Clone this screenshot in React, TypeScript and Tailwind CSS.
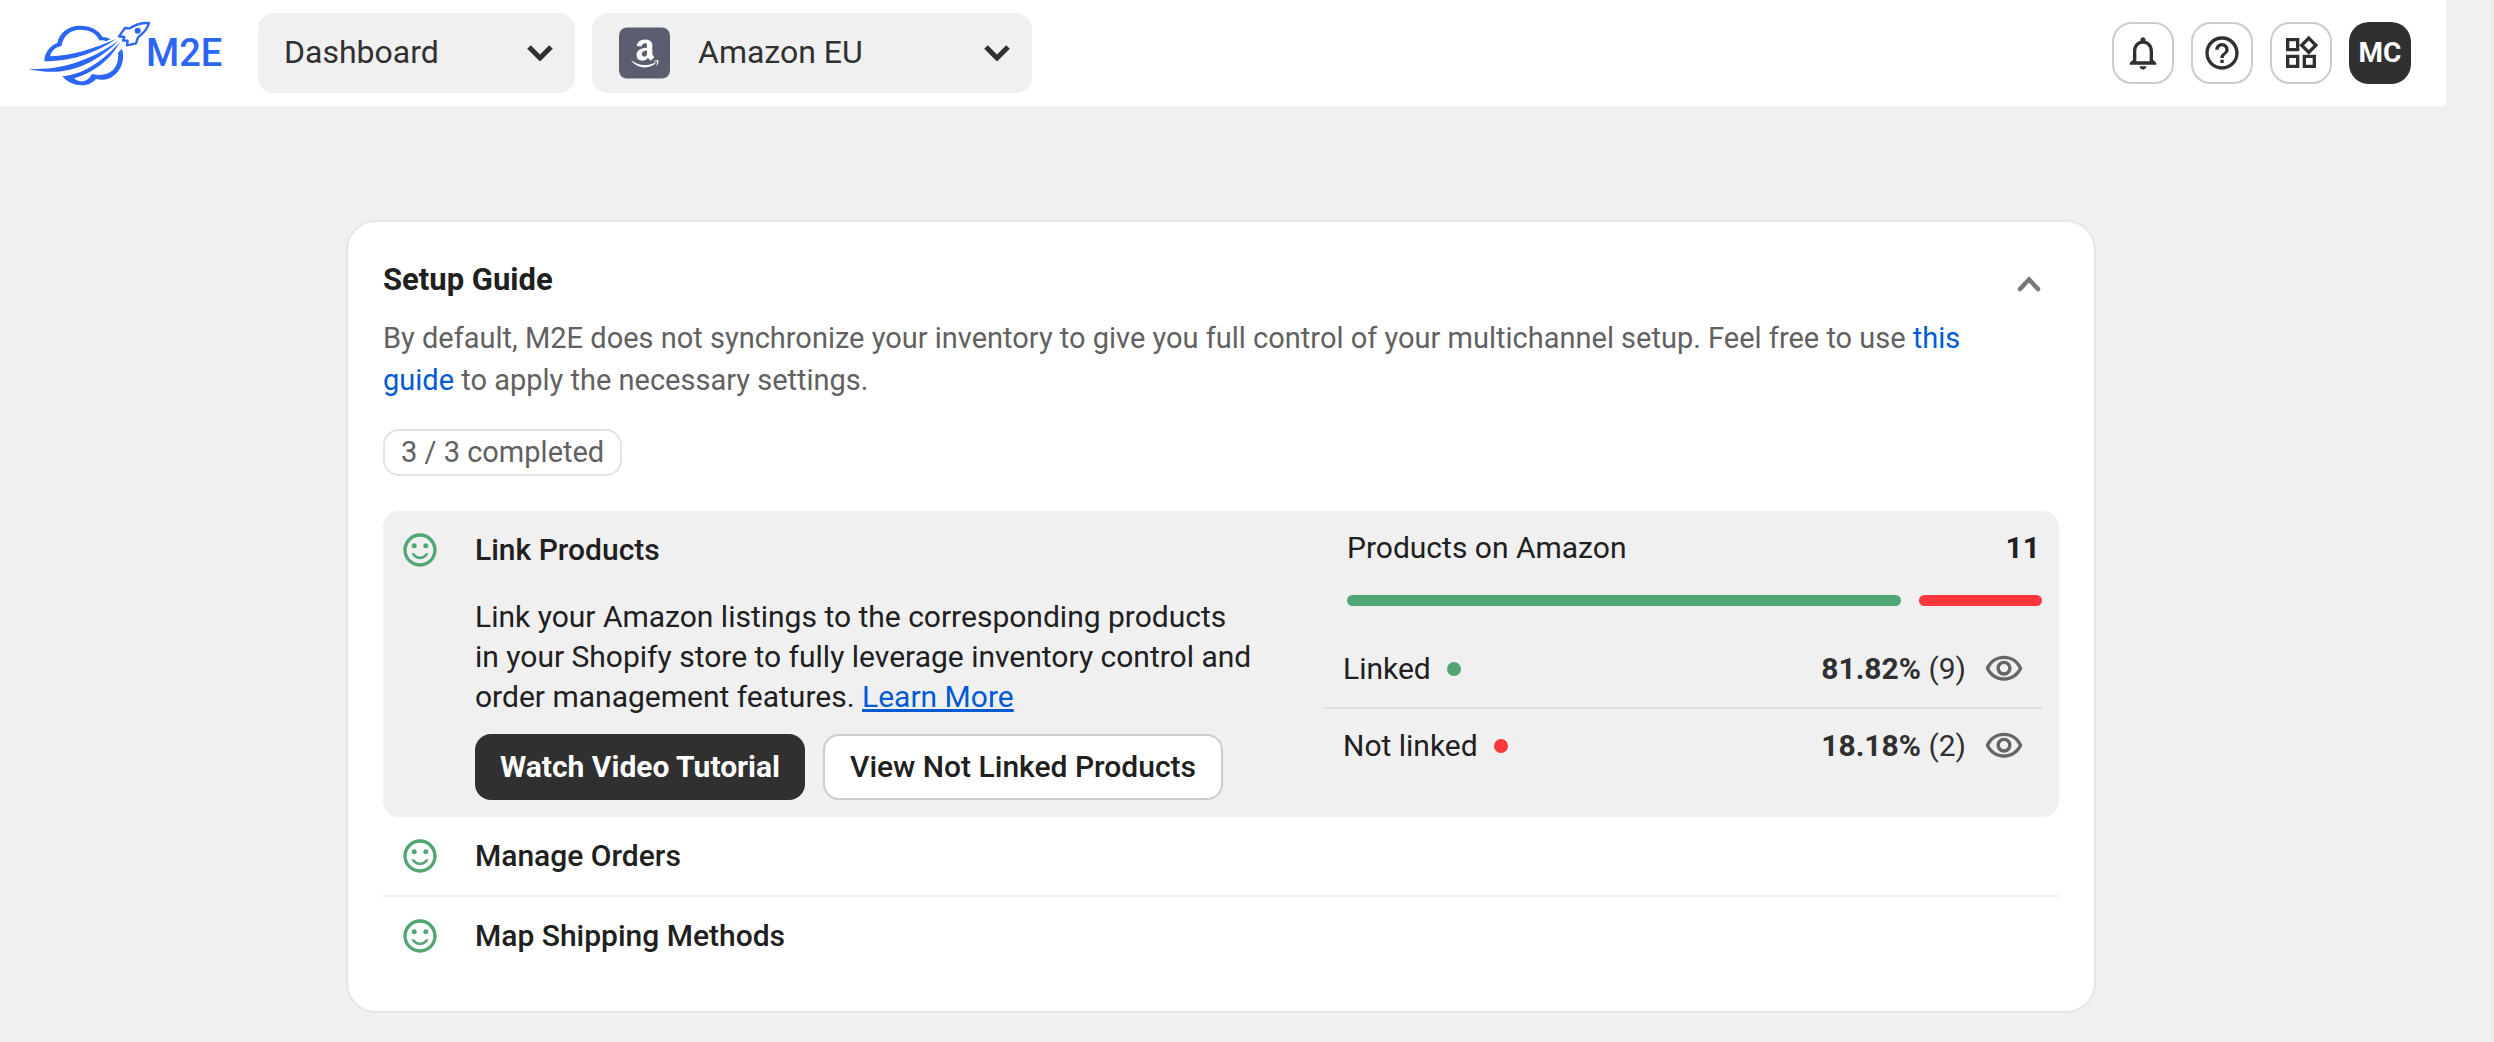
import React, { useState } from 'react';
import { FaAmazon } from 'react-icons/fa';
import {
  MdHelpOutline,
  MdNotificationsNone,
  MdOutlineSentimentSatisfiedAlt,
  MdOutlineVisibility,
  MdOutlineWidgets,
} from 'react-icons/md';

const LINKED = 9;
const NOT_LINKED = 2;
const TOTAL = LINKED + NOT_LINKED;

const percent = (count: number) => `${((count / TOTAL) * 100).toFixed(2)}%`;

const Logo: React.FC = () => (
  <a href="#" aria-label="M2E" className="flex w-[196px] shrink-0 items-center text-[#2b66f6]">
    <svg className="h-[66px] w-[122px] shrink-0" viewBox="28 28 366 198" fill="none">
      {/* cloud, upper half */}
      <path
        fill="currentColor"
        d="M77 152C77 128 92 106 116 97C122 66 150 45 184 45C216 45 240 58 251 79C259 79 268 81 276 86L262 92C256 89 250 88 243 90C234 68 212 57 185 57C154 57 133 76 129 105C110 110 98 120 94 137C160 136 230 112 292 85C240 121 170 152 77 152Z"
      />
      {/* middle streak */}
      <path fill="currentColor" d="M29 174C130 180 215 148 300 90C240 150 150 206 29 174Z" />
      {/* cloud, lower half */}
      <path
        fill="currentColor"
        d="M131 197C205 190 262 140 304 94C284 132 240 182 166 203C180 216 205 218 220 190C234 194 246 194 258 191C286 185 302 160 298 126L310 114C320 146 308 184 276 201C262 208 246 209 232 205C210 232 160 231 131 197Z"
      />
      {/* rocket */}
      <path
        stroke="currentColor"
        strokeWidth="7"
        strokeLinejoin="round"
        d="M391 37C368 36 347 43 333 53L319 52L301 77L317 79L313 90L327 90L325 104L352 98L358 80C374 68 387 54 391 37Z"
      />
      <circle cx="357" cy="60" r="9" fill="currentColor" />
    </svg>
    <span className="-ml-1 text-[38px] leading-none font-medium">M2E</span>
  </a>
);

const SelectChevron: React.FC = () => (
  <svg
    className="pointer-events-none absolute top-1/2 right-[22px] h-[16px] w-[26px] -translate-y-1/2"
    viewBox="0 0 26 16"
    fill="none"
    stroke="#303030"
    strokeWidth="5"
  >
    <path d="M2 2L13 13L24 2" />
  </svg>
);

const AmazonMark: React.FC = () => (
  <span className="pointer-events-none absolute top-1/2 left-[27px] flex h-[51px] w-[51px] -translate-y-1/2 items-center justify-center rounded-lg bg-[#5b5e70] text-white">
    <FaAmazon size={32} />
  </span>
);

const iconButton =
  'flex h-[62px] w-[62px] items-center justify-center rounded-[20px] border-2 border-[#cccccc] bg-white text-[#303030]';

const Header: React.FC = () => (
  <header className="flex h-[106px] items-center bg-white pr-[35px] pl-7">
    <Logo />
    <div className="relative ml-[34px] w-[317px]">
      <select
        aria-label="Section"
        className="block h-20 w-full appearance-none rounded-2xl bg-[#f0f0f0] pr-14 pb-[3px] pl-[26px] text-[32px] leading-[48px] text-[#303030]"
      >
        <option>Dashboard</option>
      </select>
      <SelectChevron />
    </div>
    <div className="relative ml-[17px] w-[440px]">
      <select
        aria-label="Marketplace"
        className="block h-20 w-full appearance-none rounded-2xl bg-[#f0f0f0] pr-14 pb-[3px] pl-[106px] text-[32px] leading-[48px] text-[#303030]"
      >
        <option>Amazon EU</option>
      </select>
      <AmazonMark />
      <SelectChevron />
    </div>

    <div className="ml-auto flex items-center gap-[17px]">
      <button aria-label="Notifications" className={iconButton}>
        <MdNotificationsNone size={40} />
      </button>
      <button aria-label="Help" className={iconButton}>
        <MdHelpOutline size={40} />
      </button>
      <button aria-label="Apps" className={iconButton}>
        <MdOutlineWidgets size={40} />
      </button>
      <button className="h-[62px] w-[62px] rounded-[20px] bg-[#303030] text-[28px] font-bold text-white">MC</button>
    </div>
  </header>
);

const StepTitle: React.FC<{ title: string }> = ({ title }) => (
  <div className="flex h-[78px] items-center gap-[35px]">
    <MdOutlineSentimentSatisfiedAlt size={40} className="shrink-0 text-[#51a673]" />
    <h3 className="text-[30px] leading-10 font-medium">{title}</h3>
  </div>
);

const StatRow: React.FC<{ label: string; count: number; dot: string }> = ({ label, count, dot }) => (
  <div className="flex h-[77px] items-center px-[18px]">
    <span>{label}</span>
    <span className={`ml-4 h-[14px] w-[14px] rounded-full ${dot}`} />
    <span className="ml-auto text-[#303030]">
      <b className="font-bold">{percent(count)}</b> ({count})
    </span>
    <button aria-label={`View ${label.toLowerCase()} products`} className="ml-[18px] text-[#666666]">
      <MdOutlineVisibility size={40} />
    </button>
  </div>
);

const LinkProducts: React.FC = () => (
  <section className="grid grid-cols-[925fr_717fr] rounded-2xl bg-[#f0f0f0] px-[17px] pb-[17px]">
    <div>
      <StepTitle title="Link Products" />
      <div className="mt-2 pl-[75px]">
        <p className="max-w-[800px] text-[30px] leading-10">
          Link your Amazon listings to the corresponding products
          <br />
          in your Shopify store to fully leverage inventory control and order management features.{' '}
          <a href="#" className="text-[#005bd3] underline">
            Learn More
          </a>
        </p>
        <div className="mt-[17px] flex gap-[18px]">
          <button className="h-[66px] rounded-2xl bg-[#303030] px-[25px] pb-0.5 text-[30px] font-bold text-white">
            Watch Video Tutorial
          </button>
          <button className="h-[66px] rounded-2xl border-2 border-[#cccccc] bg-white px-[25px] pb-0.5 text-[30px] font-medium">
            View Not Linked Products
          </button>
        </div>
      </div>
    </div>

    <div className="text-[30px] leading-10">
      <div className="flex h-[73px] items-center justify-between pl-[22px]">
        <span>Products on Amazon</span>
        <b className="pr-0.5 font-bold">{TOTAL}</b>
      </div>
      <div className="mt-[11px] mb-6 flex h-[11px] gap-[18px] pl-[22px]">
        <div className="rounded-full bg-[#51a673]" style={{ flexGrow: LINKED }} />
        <div className="rounded-full bg-[#fd373b]" style={{ flexGrow: NOT_LINKED }} />
      </div>
      <StatRow label="Linked" count={LINKED} dot="bg-[#51a673]" />
      <div className="-mb-0.5 h-0.5 bg-[#dedede]" />
      <StatRow label="Not linked" count={NOT_LINKED} dot="bg-[#fd373b]" />
    </div>
  </section>
);

const App: React.FC = () => {
  const [open, setOpen] = useState(true);

  return (
    <div className="min-h-screen border-r-2 border-[#e8e8e8] bg-[#f0f0f0] pr-[46px] font-[Roboto,sans-serif] text-[#202020]">
      <Header />
      <main className="pt-[114px] pr-1 pb-[30px]">
        <div className="mx-auto max-w-[1750px] rounded-[30px] border-2 border-[#e5e6e8] bg-white px-[35px] pt-[37px] pb-9">
          <div className="flex items-center justify-between">
            <h2 className="text-[31px] leading-[42px] font-bold">Setup Guide</h2>
            <button aria-label="Toggle setup guide" onClick={() => setOpen(!open)} className="mr-[18px]">
              <svg className="h-6 w-6" viewBox="0 0 24 24" fill="none" stroke="#777777" strokeWidth="4.5">
                <path d="M3 21L12 11.5L21 21" strokeLinecap="round" />
              </svg>
            </button>
          </div>
          <p className="mt-4 max-w-[1600px] text-[29px] leading-[42px] text-[#616161]">
            By default, M2E does not synchronize your inventory to give you full control of your multichannel setup. Feel
            free to use{' '}
            <a href="#" className="text-[#005bd3]">
              this guide
            </a>{' '}
            to apply the necessary settings.
          </p>
          <div className="mt-7 mb-[35px] flex">
            <span className="flex h-[47px] items-center rounded-2xl border-2 border-[#e3e3e3] px-4 text-[29px] text-[#616161]">
              3 / 3 completed
            </span>
          </div>

          {open && (
            <>
              <LinkProducts />
              <div className="border-b-2 border-[#efefef] px-[17px]">
                <StepTitle title="Manage Orders" />
              </div>
              <div className="px-[17px]">
                <StepTitle title="Map Shipping Methods" />
              </div>
            </>
          )}
        </div>
      </main>
    </div>
  );
};

export default App;
